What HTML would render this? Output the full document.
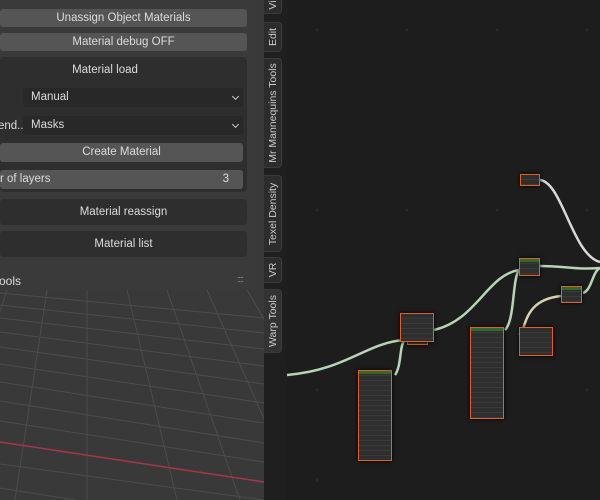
<!DOCTYPE html>
<html><head><meta charset="utf-8"><style>
*{margin:0;padding:0;box-sizing:border-box}
body{width:600px;height:500px;overflow:hidden;background:#1d1d1d;font-family:"Liberation Sans","DejaVu Sans",sans-serif;font-size:11.5px;color:#dcdcdc;position:relative}
.abs{position:absolute}
#left{left:0;top:0;width:264px;height:500px;background:#393939;overflow:hidden}
.btn{position:absolute;background:#555;border-radius:3px;text-align:center;line-height:18px;height:18px}
.box{position:absolute;background:#2e2e2e;border-radius:4px}
.dd{position:absolute;background:#282828;border-radius:3px;height:19px;line-height:19px;padding-left:8px}
.dd:after{content:"";position:absolute;right:5px;top:6px;width:4px;height:4px;border-right:1.5px solid #ccc;border-bottom:1.5px solid #ccc;transform:rotate(45deg)}
#side{left:264px;top:0;width:23px;height:500px;background:#1f1f1f}
.tab{position:absolute;left:264px;width:18px;background:#2c2c2c;border:1px solid #3a3a3a;border-left:none;border-radius:0 4px 4px 0}
.tab span{position:absolute;left:50%;top:50%;transform:translate(-50%,-50%) rotate(-90deg);white-space:nowrap;font-size:10.5px;color:#ccc}
.node{position:absolute;background:#2e2e2e;border:1.5px solid #e0621c;box-shadow:0 0 4px #000;background-image:repeating-linear-gradient(#2e2e2e 0 4px,#3a3a3a 4px 5px)}
.node i{display:block;height:3px;background:#2f6b2f}
</style></head><body>
<div id="left" class="abs">
<svg class="abs" style="left:0;top:0" width="264" height="500">
<g stroke="#4c4c4c" stroke-width="1">
<line x1="7" y1="290" x2="-60" y2="500"/><line x1="47" y1="290" x2="15" y2="500"/><line x1="87" y1="290" x2="87" y2="500"/><line x1="127" y1="290" x2="177" y2="500"/><line x1="167" y1="290" x2="240" y2="500"/><line x1="207" y1="290" x2="300" y2="500"/><line x1="247" y1="290" x2="370" y2="500"/>
<line x1="0" y1="293" x2="264" y2="318"/><line x1="0" y1="305" x2="264" y2="333"/><line x1="0" y1="318" x2="264" y2="349"/><line x1="0" y1="332" x2="264" y2="366"/><line x1="0" y1="347" x2="264" y2="384"/><line x1="0" y1="364" x2="264" y2="403"/><line x1="0" y1="382" x2="264" y2="423"/><line x1="0" y1="401" x2="264" y2="443"/><line x1="0" y1="421" x2="264" y2="462"/><line x1="0" y1="464" x2="264" y2="500"/><line x1="0" y1="488" x2="200" y2="520"/>
</g>
<line x1="0" y1="442" x2="264" y2="482" stroke="#a8364a" stroke-width="1.5"/>
</svg>
<div class="abs" style="left:0;top:0;width:256px;height:290px;background:#3a3a3a"></div>
<div class="btn" style="left:0;top:9px;width:247px">Unassign Object Materials</div>
<div class="btn" style="left:0;top:33px;width:247px">Material debug OFF</div>
<div class="box" style="left:0;top:57px;width:247px;height:135px"></div>
<div class="abs" style="left:0;top:64px;width:210px;text-align:center">Material load</div>
<div class="dd" style="left:23px;top:88px;width:220px">Manual</div>
<div class="abs" style="left:-2px;top:120px">end...</div>
<div class="dd" style="left:23px;top:116px;width:220px">Masks</div>
<div class="btn" style="left:0;top:143px;width:243px;height:19px;line-height:19px">Create Material</div>
<div class="btn" style="left:0;top:170px;width:243px;height:19px;line-height:19px;text-align:left">r of layers<span style="position:absolute;right:14px">3</span></div>
<div class="box" style="left:0;top:199px;width:247px;height:26px;line-height:26px;text-align:center;padding-left:0">Material reassign</div>
<div class="box" style="left:0;top:231px;width:247px;height:26px;line-height:26px;text-align:center">Material list</div>
<div class="abs" style="left:-1px;top:274px;font-size:12px">ools</div>
<div class="abs" style="left:237px;top:274px;font-size:9px;color:#999;letter-spacing:-1px">::::</div>
</div>
<div id="side" class="abs"></div>
<div class="tab" style="top:-4px;height:18px"><span>Vi</span></div>
<div class="tab" style="top:22px;height:30px"><span>Edit</span></div>
<div class="tab" style="top:58px;height:110px"><span>Mr Mannequins Tools</span></div>
<div class="tab" style="top:175px;height:77px"><span>Texel Density</span></div>
<div class="tab" style="top:257px;height:26px"><span>VR</span></div>
<div class="tab" style="top:289px;height:64px;background:#333"><span>Warp Tools</span></div>
<svg class="abs" style="left:287px;top:0" width="313" height="500">
<g fill="#2a2a2a"><circle cx="30" cy="30" r="1.5"/><circle cx="120" cy="30" r="1.5"/><circle cx="210" cy="30" r="1.5"/><circle cx="300" cy="30" r="1.5"/><circle cx="30" cy="210" r="1.5"/><circle cx="120" cy="210" r="1.5"/><circle cx="210" cy="210" r="1.5"/><circle cx="300" cy="210" r="1.5"/><circle cx="30" cy="390" r="1.5"/><circle cx="300" cy="390" r="1.5"/><circle cx="30" cy="480" r="1.5"/></g>
<g fill="none" stroke-width="2.5">
<path d="M0 375 C60 370 80 342 118 340" stroke="#b7d4b5"/>
<path d="M147 330 C190 320 200 275 232 270" stroke="#b7d4b5"/>
<path d="M252 266 C280 266 290 270 313 268" stroke="#b7d4b5"/>
<path d="M108 375 C115 365 112 345 118 340" stroke="#b7d4b5"/>
<path d="M218 330 C228 320 225 280 232 270" stroke="#b7d4b5"/>
<path d="M296 293 C305 290 305 272 313 268" stroke="#b7d4b5"/>
<path d="M232 335 C240 330 235 300 274 296" stroke="#d6d2ae"/>
<path d="M252 180 C275 180 285 255 313 262" stroke="#d8d8d8"/>
</g>
</svg>
<div class="node" style="left:520px;top:174px;width:20px;height:12px"></div>
<div class="node" style="left:407px;top:328px;width:21px;height:17px"></div>
<div class="node" style="left:519px;top:258px;width:21px;height:18px"><i></i></div>
<div class="node" style="left:561px;top:286px;width:21px;height:17px"><i></i></div>
<div class="node" style="left:400px;top:313px;width:34px;height:29px"></div>
<div class="node" style="left:358px;top:370px;width:34px;height:91px"><i></i></div>
<div class="node" style="left:470px;top:327px;width:34px;height:92px"><i></i></div>
<div class="node" style="left:519px;top:327px;width:34px;height:29px"></div>
</body></html>
